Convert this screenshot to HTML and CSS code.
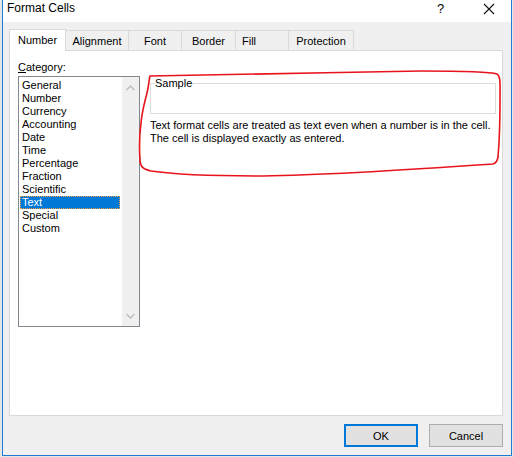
FILE: index.html
```html
<!DOCTYPE html>
<html>
<head>
<meta charset="utf-8">
<link rel="stylesheet" href="styles.css">
</head>
<body>
<div class="window">
  <div class="titlebar">
    <span class="title">Format Cells</span>
    <span class="help">?</span>
    <span class="close"><svg width="12" height="12" viewBox="0 0 12 12"><path d="M1 1L11 11M11 1L1 11" stroke="#111" stroke-width="1.1" fill="none"/></svg></span>
  </div>
  <div class="content">
    <div class="tabs">
      <div class="tab active">Number</div>
      <div class="tab">Alignment</div>
      <div class="tab">Font</div>
      <div class="tab">Border</div>
      <div class="tab">Fill</div>
      <div class="tab">Protection</div>
    </div>
    <div class="panel">
      <div class="left">
        <div class="label"><u>C</u>ategory:</div>
        <div class="listbox">
          <ul class="items">
            <li>General</li>
            <li>Number</li>
            <li>Currency</li>
            <li>Accounting</li>
            <li>Date</li>
            <li>Time</li>
            <li>Percentage</li>
            <li>Fraction</li>
            <li>Scientific</li>
            <li class="sel">Text</li>
            <li>Special</li>
            <li>Custom</li>
          </ul>
          <div class="scrollbar">
            <svg width="9" height="6" viewBox="0 0 9 6"><path d="M0.5 5L4.5 1L8.5 5" stroke="#bdbdbd" stroke-width="1.4" fill="none"/></svg>
            <svg width="9" height="6" viewBox="0 0 9 6"><path d="M0.5 1L4.5 5L8.5 1" stroke="#bdbdbd" stroke-width="1.4" fill="none"/></svg>
          </div>
        </div>
      </div>
      <div class="right">
        <fieldset class="sample"><legend>Sample</legend></fieldset>
        <p class="desc">Text format cells are treated as text even when a number is in the cell.<br>The cell is displayed exactly as entered.</p>
      </div>
      <svg class="scribble" width="513" height="200" viewBox="0 0 513 200">
        <path d="M149 75 C 230 73, 330 72, 420 70 C 460 70, 490 71, 496 73 C 500 75, 499 85, 499 100 C 499 125, 498 145, 497 156 C 496 162, 494 162, 492 163 C 420 168, 330 174, 262 175 C 210 175, 170 173, 150 170 C 141 168, 139 165, 139 158 C 138 145, 139 130, 140 122 C 141 110, 144 100, 146 92 C 148 84, 148 78, 149 75 Z" fill="none" stroke="#e8141c" stroke-width="1.6"/>
      </svg>
    </div>
    <div class="buttons">
      <button class="btn default">OK</button>
      <button class="btn">Cancel</button>
    </div>
  </div>
</div>
</body>
</html>
```

FILE: styles.css
```css
html, body {
  margin: 0;
  padding: 0;
}
body {
  background: #e6e6e6;
  width: 513px;
  height: 457px;
  overflow: hidden;
  font-family: "Liberation Sans", Arial, sans-serif;
  font-size: 11px;
  color: #000;
}
.window {
  margin-left: 2px;
  width: 510px;
  height: 456px;
  border: 1px solid #1c7bd4;
  border-top: none;
  background: #f0f0f0;
  display: flex;
  flex-direction: column;
  box-sizing: border-box;
}
.titlebar {
  height: 22px;
  background: #fff;
  display: flex;
  align-items: center;
}
.title {
  margin-left: 4px;
  font-size: 12px;
  line-height: 14px;
  margin-top: -6px;
}
.help {
  margin-left: auto;
  width: 12px;
  font-size: 13px;
  margin-top: -5px;
}
.close {
  margin-left: 34px;
  margin-right: 16px;
  display: flex;
  margin-top: -4px;
}
.content {
  flex: 1;
  padding: 7px 8px 0 6px;
  display: flex;
  flex-direction: column;
}
.tabs {
  display: flex;
  align-items: flex-end;
  height: 21px;
  position: relative;
  z-index: 1;
}
.tab {
  height: 20px;
  box-sizing: border-box;
  border: 1px solid #d9d9d9;
  border-bottom: none;
  margin-left: -1px;
  line-height: 17px;
  padding-top: 2px;
  background: #f0f0f0;
  text-align: center;
}
.tab:nth-child(2) { width: 64px; }
.tab:nth-child(3) { width: 54px; }
.tab:nth-child(4) { width: 55px; }
.tab:nth-child(5) { width: 54px; text-align: left; padding-left: 6px; }
.tab:nth-child(6) { width: 66px; }
.tab.active {
  margin-left: 0;
  width: 57px;
  height: 22px;
  background: #fff;
  padding-top: 2px;
  margin-bottom: -1px;
}
.panel {
  height: 366px;
  box-sizing: border-box;
  border: 1px solid #d9d9d9;
  background: #fff;
  display: flex;
  padding: 9px 0 0 8px;
  position: relative;
}
.left {
  width: 123px;
}
.label {
  line-height: 14px;
  height: 16px;
}
.listbox {
  width: 122px;
  height: 251px;
  box-sizing: border-box;
  border: 1px solid #828790;
  display: flex;
  background: #fff;
}
.items {
  list-style: none;
  margin: 0;
  padding: 2px 0 0 1px;
  flex: 1;
}
.items li {
  height: 13px;
  line-height: 13px;
  padding-left: 2px;
  white-space: nowrap;
}
.items li.sel {
  background: #0078d7;
  color: #fff;
  outline: 1px dotted #f7a040;
  outline-offset: -1px;
  margin-right: 2px;
}
.scrollbar {
  width: 17px;
  background: #f0f0f0;
  display: flex;
  flex-direction: column;
  justify-content: space-between;
  align-items: center;
  padding: 8px 0 7px;
  box-sizing: border-box;
}
.right {
  margin-left: 9px;
  width: 346px;
  padding-top: 17px;
}
.sample {
  margin: 0;
  height: 37px;
  box-sizing: border-box;
  border: 1px solid #dcdcdc;
  padding: 0 4px;
  min-width: 0;
}
.sample legend {
  padding: 0;
  line-height: 13px;
  font-size: 11px;
}
.desc {
  margin: 5px 0 0 0;
  line-height: 13px;
  white-space: nowrap;
}
.scribble {
  position: absolute;
  left: -9px;
  top: -50px;
  pointer-events: none;
}
.buttons {
  display: flex;
  justify-content: flex-end;
  gap: 11px;
  padding-top: 8px;
}
.btn {
  width: 74px;
  height: 23px;
  font-family: "Liberation Sans", Arial, sans-serif;
  font-size: 11px;
  background: #e1e1e1;
  border: 1px solid #adadad;
  padding: 0;
  color: #000;
}
.btn.default {
  border: 2px solid #0078d7;
}
```
